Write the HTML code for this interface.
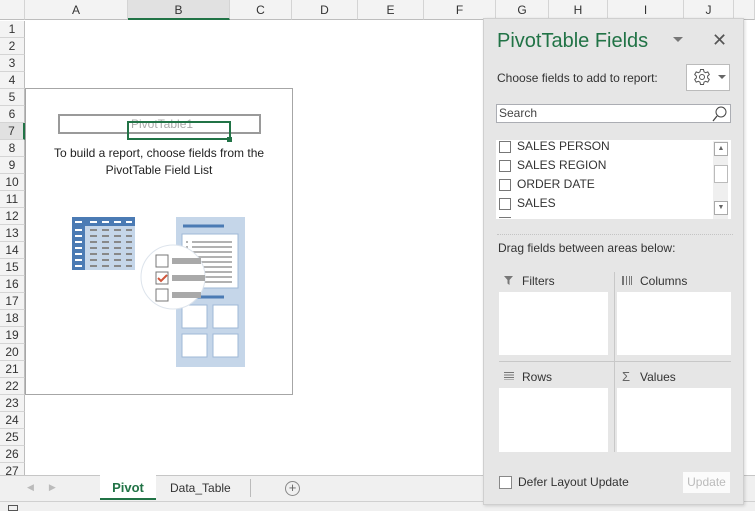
<!DOCTYPE html>
<html><head><meta charset="utf-8"><style>
*{margin:0;padding:0;box-sizing:border-box}
body{width:755px;height:511px;overflow:hidden;background:#fff;font-family:"Liberation Sans",sans-serif;position:relative}
.abs{position:absolute}
.ch{position:absolute;top:0;height:20px;background:#f3f3f3;border-right:1px solid #d4d4d4;border-bottom:1px solid #bdbdbd;font-size:12px;color:#333;text-align:center;line-height:20px}
.rh{position:absolute;left:0;width:25px;height:17px;background:#f3f3f3;border-bottom:1px solid #d4d4d4;border-right:1px solid #bdbdbd;font-size:12px;color:#333;text-align:center;line-height:17px}
.cb{position:absolute;width:12px;height:12px;border:1px solid #777;background:#fff}
.fl{position:absolute;left:517px;font-size:12px;color:#333}
.box{position:absolute;background:#fff}
.lbl{position:absolute;font-size:12px;color:#333}
</style></head><body>
<div class="ch" style="left:0;width:25px"></div>
<div class="ch" style="left:25px;width:103px">A</div>
<div class="ch" style="left:128px;width:102px;background:#e1e1e1;border-bottom:2px solid #217346">B</div>
<div class="ch" style="left:230px;width:62px">C</div>
<div class="ch" style="left:292px;width:66px">D</div>
<div class="ch" style="left:358px;width:66px">E</div>
<div class="ch" style="left:424px;width:72px">F</div>
<div class="ch" style="left:496px;width:53px">G</div>
<div class="ch" style="left:549px;width:59px">H</div>
<div class="ch" style="left:608px;width:76px">I</div>
<div class="ch" style="left:684px;width:50px">J</div>
<div class="ch" style="left:734px;width:21px"></div>
<div id="rows"></div>
<script>
var h='';for(var i=1;i<=27;i++){var st=i==7?'background:#e1e1e1;border-right:2px solid #217346;':'';h+='<div class="rh" style="top:'+(21+(i-1)*17)+'px;'+st+'">'+i+'</div>';}
document.getElementById('rows').innerHTML=h;
</script>
<div class="abs" style="left:25px;top:88px;width:268px;height:307px;border:1px solid #a6a6a6"></div>
<div class="abs" style="left:58px;top:114px;width:203px;height:20px;border:2px solid #9a9a9a;font-size:12px;color:#aaa;line-height:16px;padding-left:71px">PivotTable1</div>
<div class="abs" style="left:127px;top:121px;width:104px;height:19px;border:2px solid #217346"></div>
<div class="abs" style="left:227px;top:137px;width:5px;height:5px;background:#217346"></div>
<div class="abs" style="left:25px;top:145px;width:268px;text-align:center;font-size:12px;color:#222;line-height:17px">To build a report, choose fields from the<br>PivotTable Field List</div>
<svg class="abs" style="left:60px;top:210px" width="200" height="160">
<rect x="12" y="7" width="63" height="53" fill="#c5d6e9"/>
<rect x="12" y="7" width="63" height="9" fill="#4b7bb4"/>
<rect x="12" y="7" width="13" height="53" fill="#4b7bb4"/>
<g stroke="#fff" stroke-width="2"><path d="M15 12h7M30 12h7M42 12h7M54 12h7M66 12h6"/><path d="M15 20h7M15 26h7M15 32h7M15 38h7M15 44h7M15 50h7M15 56h7"/></g>
<g stroke="#888" stroke-width="2"><path d="M30 20h7M42 20h7M54 20h7M66 20h6M30 26h7M42 26h7M54 26h7M66 26h6M30 32h7M42 32h7M54 32h7M66 32h6M30 38h7M42 38h7M54 38h7M66 38h6M30 44h7M42 44h7M54 44h7M66 44h6M30 50h7M42 50h7M54 50h7M66 50h6M30 56h7M42 56h7M54 56h7M66 56h6"/></g>
<rect x="116" y="7" width="69" height="150" fill="#c5d6e9"/>
<path d="M123 16h41M123 87h41" stroke="#4b7bb4" stroke-width="3"/>
<rect x="122" y="24" width="56" height="54" fill="#fff" stroke="#9fb8d6"/>
<g stroke="#999" stroke-width="1.5"><path d="M126 32h2M132 32h40M126 37h2M132 37h40M132 42h40M132 47h40M132 52h40M132 57h40M132 62h40M132 67h40M132 72h40"/></g>
<rect x="122" y="95" width="25" height="23" fill="#fff" stroke="#9fb8d6"/><rect x="153" y="95" width="25" height="23" fill="#fff" stroke="#9fb8d6"/>
<rect x="122" y="124" width="25" height="23" fill="#fff" stroke="#9fb8d6"/><rect x="153" y="124" width="25" height="23" fill="#fff" stroke="#9fb8d6"/>
<circle cx="113" cy="67" r="32" fill="#fff" stroke="#dde4ec"/>
<rect x="96" y="45" width="12" height="12" fill="#fff" stroke="#777"/>
<rect x="96" y="62" width="12" height="12" fill="#fff" stroke="#777"/>
<rect x="96" y="79" width="12" height="12" fill="#fff" stroke="#777"/>
<path d="M98 68l3 3 6-6" stroke="#d0573c" stroke-width="2" fill="none"/>
<g fill="#a9a9a9"><rect x="112" y="48" width="29" height="6"/><rect x="112" y="65" width="33" height="6"/><rect x="112" y="82" width="29" height="6"/></g>
</svg>
<div class="abs" style="left:0;top:475px;width:755px;height:26px;background:#f0f0f0;border-top:1px solid #c6c6c6"></div>
<div class="abs" style="left:27px;top:482px;font-size:9px;color:#bbb">◀&nbsp;&nbsp;&nbsp;&nbsp;&nbsp;&nbsp;▶</div>
<div class="abs" style="left:100px;top:475px;width:56px;height:25px;background:#fff;border-bottom:2px solid #217346;color:#217346;font-weight:bold;font-size:13px;text-align:center;line-height:25px">Pivot</div>
<div class="abs" style="left:170px;top:481px;font-size:12px;color:#333">Data_Table</div>
<div class="abs" style="left:250px;top:479px;width:1px;height:18px;background:#bbb"></div>
<div class="abs" style="left:285px;top:481px;width:15px;height:15px;border:1px solid #888;border-radius:50%;font-size:13px;line-height:12px;text-align:center;color:#666">+</div>
<div class="abs" style="left:0;top:501px;width:755px;height:10px;background:#f0f0f0;border-top:1px solid #d0d0d0"></div>
<div class="abs" style="left:8px;top:505px;width:10px;height:6px;border:1px solid #555"></div>
<div class="abs" style="left:483px;top:18px;width:261px;height:487px;background:#e6e6e6;border:1px solid #cfcfcf;box-shadow:1px 1px 3px rgba(0,0,0,.15)"></div>
<div class="abs" style="left:497px;top:30px;font-size:20px;color:#217346">PivotTable Fields</div>
<div class="abs" style="left:673px;top:37px;width:0;height:0;border-left:5px solid transparent;border-right:5px solid transparent;border-top:5px solid #777"></div>
<div class="abs" style="left:712px;top:30px;font-size:18px;color:#555">✕</div>
<div class="abs" style="left:497px;top:71px;font-size:12px;color:#333">Choose fields to add to report:</div>
<div class="abs" style="left:686px;top:64px;width:44px;height:27px;background:#fff;border:1px solid #bbb"></div>
<svg class="abs" style="left:693px;top:68px" width="18" height="18" viewBox="0 0 18 18"><path d="M7.5 1.5h3l.5 2.3 1.6.9 2.2-.8 1.5 2.6-1.7 1.6v1.8l1.7 1.6-1.5 2.6-2.2-.8-1.6.9-.5 2.3h-3l-.5-2.3-1.6-.9-2.2.8-1.5-2.6 1.7-1.6v-1.8l-1.7-1.6 1.5-2.6 2.2.8 1.6-.9z" fill="none" stroke="#555"/><circle cx="9" cy="9" r="2.5" fill="none" stroke="#555"/></svg>
<div class="abs" style="left:718px;top:75px;border-left:4px solid transparent;border-right:4px solid transparent;border-top:4px solid #666"></div>
<div class="abs" style="left:496px;top:104px;width:235px;height:19px;background:#fff;border:1px solid #abadb3;font-size:12px;color:#444;line-height:17px;padding-left:2px">Search</div>
<svg class="abs" style="left:711px;top:105px" width="18" height="18"><circle cx="10" cy="7" r="5" fill="none" stroke="#444"/><path d="M6 11l-4 5" stroke="#444" stroke-width="1.3"/></svg>
<div class="abs" style="left:496px;top:140px;width:235px;height:79px;background:#fff"></div>
<div class="cb" style="left:499px;top:141px"></div><div class="fl" style="top:139px">SALES PERSON</div>
<div class="cb" style="left:499px;top:160px"></div><div class="fl" style="top:158px">SALES REGION</div>
<div class="cb" style="left:499px;top:179px"></div><div class="fl" style="top:177px">ORDER DATE</div>
<div class="cb" style="left:499px;top:198px"></div><div class="fl" style="top:196px">SALES</div>
<div class="abs" style="left:499px;top:217px;width:12px;height:2px;border-top:1px solid #777"></div>
<div class="abs" style="left:713px;top:141px;width:15px;height:78px;background:#efefef"></div>
<div class="abs" style="left:714px;top:142px;width:14px;height:14px;background:#fff;border:1px solid #aaa;font-size:7px;text-align:center;line-height:12px;color:#666">▲</div>
<div class="abs" style="left:714px;top:165px;width:14px;height:18px;background:#fff;border:1px solid #bbb"></div>
<div class="abs" style="left:714px;top:201px;width:14px;height:14px;background:#fff;border:1px solid #aaa;font-size:7px;text-align:center;line-height:12px;color:#666">▼</div>
<div class="abs" style="left:497px;top:234px;width:236px;border-top:1px dotted #c4c4c4"></div>
<div class="abs" style="left:498px;top:241px;font-size:12px;color:#333">Drag fields between areas below:</div>
<div class="abs" style="left:614px;top:272px;width:1px;height:180px;background:#c8c8c8"></div>
<div class="abs" style="left:499px;top:361px;width:232px;height:1px;background:#c8c8c8"></div>
<svg class="abs" style="left:503px;top:275px" width="12" height="12"><path d="M1 1h9l-3.5 4v5l-2-1.5v-3.5z" fill="#777"/></svg>
<div class="lbl" style="left:522px;top:274px">Filters</div>
<div class="abs" style="left:622px;top:276px;width:10px;height:9px;border-left:1px solid #777;border-right:1px solid #777;background:repeating-linear-gradient(90deg,#777 0 1px,transparent 1px 3px)"></div>
<div class="lbl" style="left:640px;top:274px">Columns</div>
<div class="box" style="left:499px;top:292px;width:109px;height:63px"></div>
<div class="box" style="left:617px;top:292px;width:114px;height:63px"></div>
<div class="abs" style="left:504px;top:372px;width:10px;height:8px;background:repeating-linear-gradient(180deg,#777 0 1px,transparent 1px 2.5px)"></div>
<div class="lbl" style="left:522px;top:370px">Rows</div>
<div class="lbl" style="left:622px;top:369px;font-size:13px;color:#666">Σ</div>
<div class="lbl" style="left:640px;top:370px">Values</div>
<div class="box" style="left:499px;top:388px;width:109px;height:64px"></div>
<div class="box" style="left:617px;top:388px;width:114px;height:64px"></div>
<div class="cb" style="left:499px;top:476px;width:13px;height:13px;border-color:#888"></div>
<div class="lbl" style="left:518px;top:475px">Defer Layout Update</div>
<div class="abs" style="left:683px;top:472px;width:47px;height:21px;background:#fbfbfb;font-size:12px;color:#bbb;text-align:center;line-height:21px">Update</div>
</body></html>
